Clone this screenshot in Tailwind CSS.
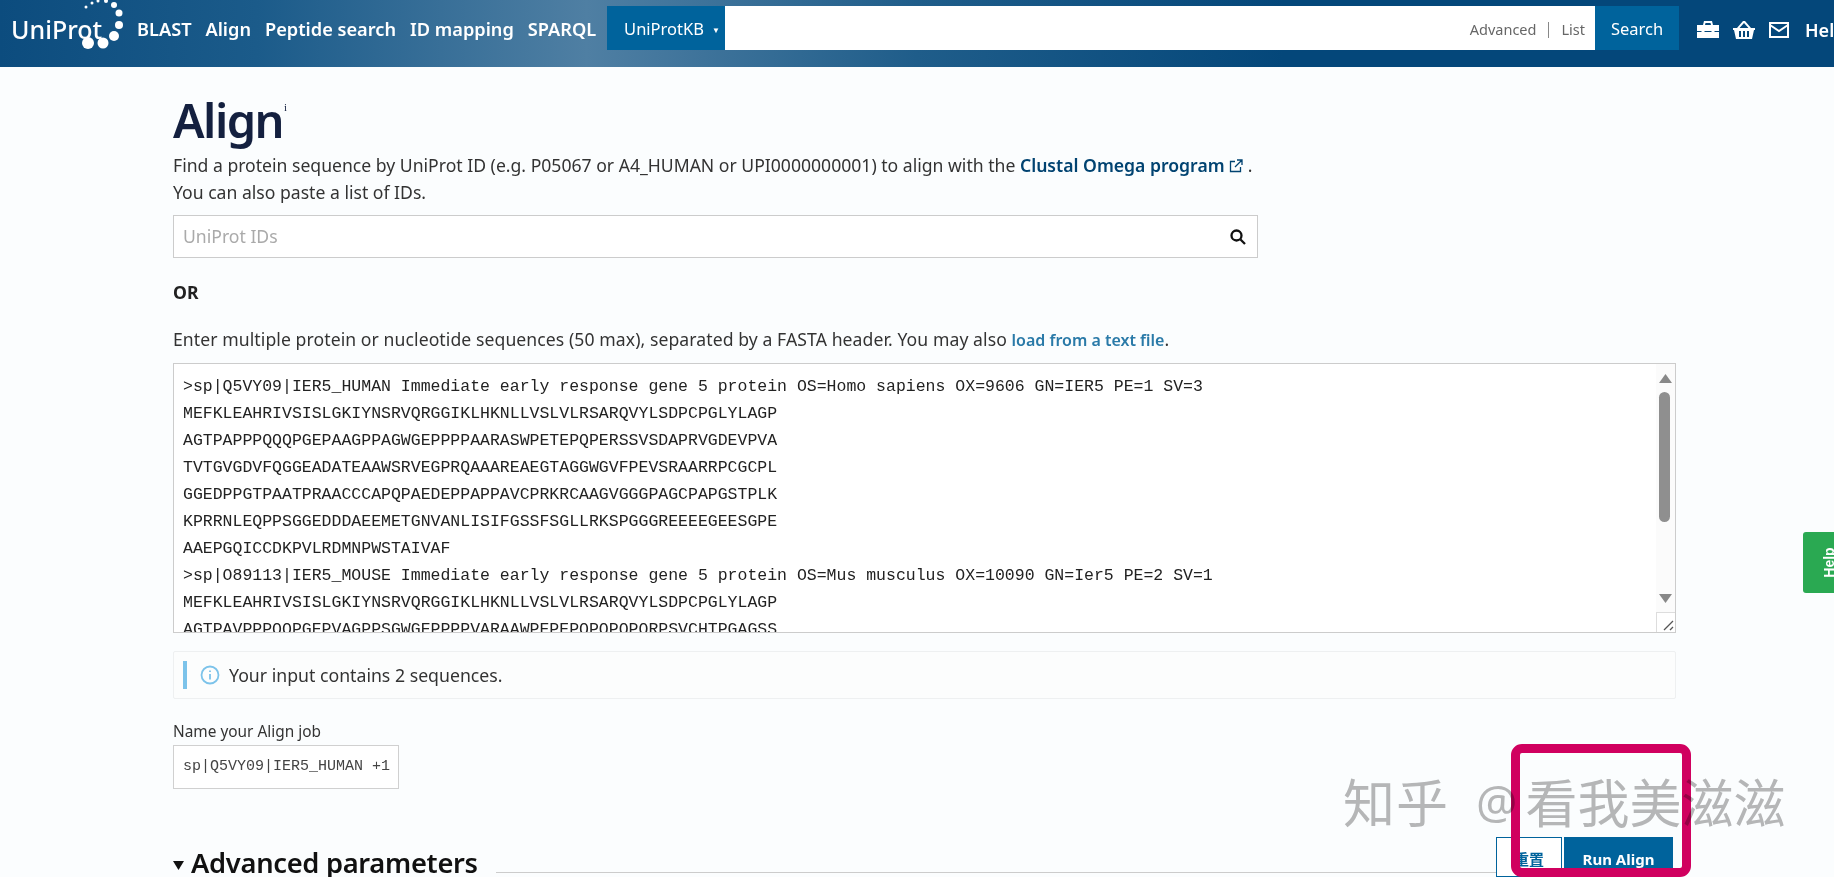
<!DOCTYPE html>
<html lang="en">
<head>
    <meta charset="UTF-8">
    <title>Align - UniProt</title>
    <script src="https://cdn.jsdelivr.net/npm/@tailwindcss/browser@4"></script>
</head>
<body class="relative w-[1834px] h-[877px] overflow-hidden bg-[#fbfdfe] text-[#333] font-['Noto_Sans',sans-serif]">
    <header class="relative flex items-start h-[67px] pt-[6px] overflow-hidden text-white bg-[linear-gradient(90deg,#0c4c7e_0%,#1b5b8a_14%,#4f7fa3_32%,#1f5d8a_50%,#04477a_70%,#04477a_100%)]">
        <div class="relative w-[137px] h-[61px] shrink-0">
            <span class="absolute left-[11px] top-[6px] text-[25px] leading-[34px] font-medium text-white">UniProt</span>
            <svg class="absolute left-0 top-[-6px]" width="137" height="67" viewBox="0 0 137 67" fill="#fff">
                <circle cx="88" cy="43" r="6"/><circle cx="103" cy="43" r="5.500"/><circle cx="114" cy="36" r="5"/><circle cx="119" cy="25" r="4"/><circle cx="119" cy="13" r="3.500"/><circle cx="114" cy="5" r="3"/><circle cx="106" cy="1" r="2"/><circle cx="98" cy="1" r="1.500"/><circle cx="92" cy="3" r="1.500"/><circle cx="86" cy="7" r="1.500"/>
            </svg>
        </div>
        <nav class="flex gap-[14px] w-[470px] shrink-0 h-[48px] items-center text-[18.200px] font-semibold">
            <a>BLAST</a><a>Align</a><a>Peptide search</a><a>ID mapping</a><a>SPARQL</a>
        </nav>
        <div class="flex items-center justify-center gap-[8px] pl-[12px] pt-[3px] w-[118px] h-[44px] bg-[#00639c] text-[16.500px] shrink-0">UniProtKB <span class="text-[8px]">▼</span></div>
        <div class="flex items-center justify-end pt-[3px] w-[870px] h-[44px] bg-white text-[#666] text-[14.500px] pr-[10px] shrink-0">
            <span>Advanced</span><span class="mx-[12px] w-px h-[16px] bg-[#888]"></span><span>List</span>
        </div>
        <div class="flex items-center justify-center pt-[2px] w-[84px] h-[44px] bg-[#00639c] text-[16.500px] shrink-0">Search</div>
        <div class="flex items-center gap-[14px] h-[48px] ml-[18px] shrink-0">
            <svg width="22" height="20" viewBox="0 0 22 20" fill="#fff"><path d="M6 5l1-4h8l1 4h-2l-.5-2h-5L8 5zM0 5h22v6H0zM0 12h22v6H0z"/><circle cx="6" cy="11.500" r="1.500"/><circle cx="16" cy="11.500" r="1.500"/></svg>
            <svg width="22" height="20" viewBox="0 0 22 20" fill="#fff"><path d="M0 8h4l6-7h2l6 7h4v2h-1l-2 9H3L1 10H0zM6.500 8h9L11 3zM6 11v6h2v-6zm4 0v6h2v-6zm4 0v6h2v-6z"/></svg>
            <svg width="20" height="16" viewBox="0 0 20 16" fill="none" stroke="#fff" stroke-width="2"><rect x="1" y="1" width="18" height="14"/><path d="M1 3l9 6 9-6"/></svg>
            <span class="ml-[2px] text-[18px] font-semibold">Help</span>
        </div>
    </header>

    <main class="pl-[173px]">
        <h1 class="mt-[23px] h-[62px] text-[47px] leading-[60px] font-semibold text-[#14203f] tracking-[-1.500px]">Align<sup class="text-[11px] font-normal align-[22px] ml-[1px] tracking-normal font-['Liberation_Serif',serif]">i</sup></h1>
        <p class="w-[1110px] text-[17.600px] leading-[27px]">Find a protein sequence by UniProt ID (e.g. P05067 or A4_HUMAN or UPI0000000001) to align with the <a class="font-semibold text-[#014371]">Clustal Omega program <svg class="inline align-[-1px]" width="14" height="14" viewBox="0 0 14 14" fill="none" stroke="#014371" stroke-width="1.300"><path d="M6 2.500H1.500v10h10V8M8 1h5v5M13 1L6 8"/></svg></a> .<br>You can also paste a list of IDs.</p>
        <div class="relative flex items-center justify-end mt-[9px] w-[1085px] h-[43px] bg-white border border-[#ccc] px-[10px]">
            <span class="absolute left-[9px] text-[17.600px] text-[#aaa]">UniProt IDs</span>
            <svg width="18" height="18" viewBox="0 0 18 18" fill="none" stroke="#111" stroke-width="2.300"><circle cx="7.500" cy="7.500" r="5"/><path d="M11.500 11.500L16 16"/></svg>
        </div>
        <p class="mt-[23px] text-[17.600px] leading-[22px] font-bold text-[#222]">OR</p>
        <p class="mt-[25px] text-[17.600px] leading-[22px] tracking-[0.08px]">Enter multiple protein or nucleotide sequences (50 max), separated by a FASTA header. You may also <a class="font-semibold text-[16px] text-[#2a7aa8] tracking-normal">load from a text file</a>.</p>

        <div class="relative mt-[12px] w-[1503px] h-[270px] bg-white border border-[#ccc] overflow-hidden pt-[9px] pl-[9px] font-['Liberation_Mono',monospace] text-[16.500px] leading-[27px] text-[#222] whitespace-nowrap">
            <div>&gt;sp|Q5VY09|IER5_HUMAN Immediate early response gene 5 protein OS=Homo sapiens OX=9606 GN=IER5 PE=1 SV=3</div>
            <div>MEFKLEAHRIVSISLGKIYNSRVQRGGIKLHKNLLVSLVLRSARQVYLSDPCPGLYLAGP</div>
            <div>AGTPAPPPQQQPGEPAAGPPAGWGEPPPPAARASWPETEPQPERSSVSDAPRVGDEVPVA</div>
            <div>TVTGVGDVFQGGEADATEAAWSRVEGPRQAAAREAEGTAGGWGVFPEVSRAARRPCGCPL</div>
            <div>GGEDPPGTPAATPRAACCCAPQPAEDEPPAPPAVCPRKRCAAGVGGGPAGCPAPGSTPLK</div>
            <div>KPRRNLEQPPSGGEDDDAEEMETGNVANLISIFGSSFSGLLRKSPGGGREEEEGEESGPE</div>
            <div>AAEPGQICCDKPVLRDMNPWSTAIVAF</div>
            <div>&gt;sp|O89113|IER5_MOUSE Immediate early response gene 5 protein OS=Mus musculus OX=10090 GN=Ier5 PE=2 SV=1</div>
            <div>MEFKLEAHRIVSISLGKIYNSRVQRGGIKLHKNLLVSLVLRSARQVYLSDPCPGLYLAGP</div>
            <div>AGTPAVPPPQQPGEPVAGPPSGWGEPPPPVARAAWPEPEPQPQPQPQRPSVCHTPGAGSS</div>
            <div class="absolute right-0 top-0 bottom-0 w-[19px] bg-[#fbfbfb]">
                <svg class="absolute left-[3px] top-[10px]" width="13" height="9" viewBox="0 0 13 9" fill="#888"><path d="M6.500 0L13 9H0z"/></svg>
                <div class="absolute left-[3px] top-[28px] w-[11px] h-[130px] rounded-full bg-[#8f8f8f]"></div>
                <svg class="absolute left-[3px] top-[230px]" width="13" height="9" viewBox="0 0 13 9" fill="#888"><path d="M6.500 9L13 0H0z"/></svg>
                <div class="absolute left-0 bottom-0 w-[19px] h-[20px] bg-white border-t border-l border-[#ddd]">
                    <svg class="absolute right-0 bottom-0" width="14" height="14" viewBox="0 0 14 14" stroke="#555" stroke-width="1.300"><path d="M3 12L12 3M9 12l3-3"/></svg>
                </div>
            </div>
        </div>

        <div class="flex items-center mt-[18px] w-[1503px] h-[48px] bg-[#fcfdfd] border border-[#eef0f1] pl-[9px] text-[17.700px] rounded-[2px]">
            <span class="w-[4px] h-[28px] bg-[#7cc3ea] mr-[13px]"></span>
            <svg class="mr-[9px]" width="20" height="20" viewBox="0 0 20 20" fill="none" stroke="#7cc3ea" stroke-width="1.800"><circle cx="10" cy="10" r="8.500"/><path d="M10 9v5.500M10 5.500v1.500"/></svg>
            Your input contains 2 sequences.
        </div>

        <label class="block mt-[23px] text-[15.400px] leading-[20px]">Name your Align job</label>
        <div class="flex items-center mt-[3px] w-[226px] h-[44px] bg-white border border-[#d0d0d0] pl-[9px] font-['Liberation_Mono',monospace] text-[15px] text-[#444] whitespace-nowrap">sp|Q5VY09|IER5_HUMAN&nbsp;+1</div>

        <div class="flex items-start mt-[48px] w-[1500px] h-[40px]">
            <h2 class="mt-[6px] h-[40px] flex items-center gap-[7px] text-[27.300px] leading-[40px] font-semibold text-[#111] tracking-[-0.3px] whitespace-nowrap">
                <svg class="mt-[4px]" width="11" height="9" viewBox="0 0 11 9" fill="#111"><path d="M0 0h11L5.500 9z"/></svg>
                <span>Advanced parameters</span>
            </h2>
            <div class="flex-1 mt-[35px] ml-[18px] h-px bg-[#ccc]"></div>
            <button class="w-[66px] h-[40px] bg-white border border-[#00639c] text-[#00639c] text-[15px] font-bold font-['Noto_Sans','Noto_Sans_CJK_SC',sans-serif] pt-[4px]">重置</button>
            <button class="ml-[2px] w-[109px] h-[40px] bg-[#00639c] text-white text-[15px] font-bold pt-[4px]">Run Align</button>
        </div>
    </main>

    <!-- feedback tab and the annotation / watermark laid over the screenshot -->
    <div class="absolute left-[1803px] top-[532px] flex items-center justify-center w-[52px] h-[61px] rounded-l-[3px] bg-[#2aa952]">
        <span class="-rotate-90 text-white text-[14px] font-bold font-['Liberation_Sans',sans-serif]">Help</span>
    </div>
    <div class="absolute left-[1511px] top-[744px] w-[180px] h-[133px] border-[9px] border-[#d0005f] rounded-[11px]"></div>
    <div class="absolute left-[1343px] top-[765px] flex items-center text-[52px] leading-[72px] text-[#b8b8b8] mix-blend-multiply whitespace-nowrap font-['Noto_Sans_CJK_SC',sans-serif]">
        <span class="tracking-[1px]">知乎</span><span class="ml-[27px] font-['Noto_Sans',sans-serif] text-[46px]">@</span><span class="ml-[8px]">看我美滋滋</span>
    </div>
</body>
</html>
